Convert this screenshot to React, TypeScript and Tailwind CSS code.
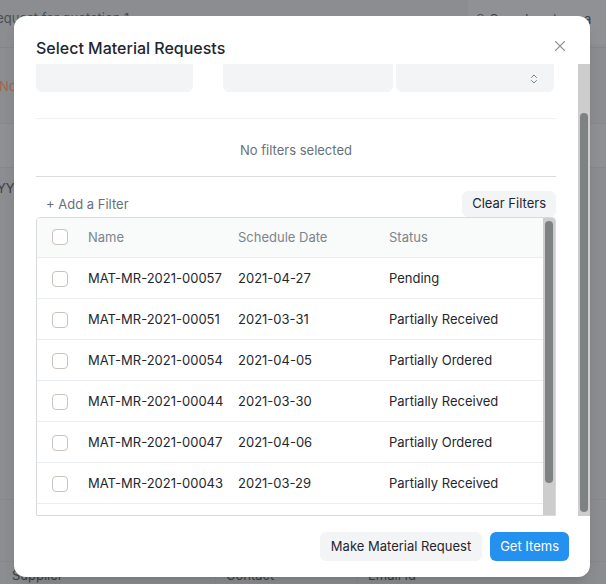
import { X, ChevronsUpDown, Search } from "lucide-react";

const rows = [
  { name: "MAT-MR-2021-00057", date: "2021-04-27", status: "Pending" },
  { name: "MAT-MR-2021-00051", date: "2021-03-31", status: "Partially Received" },
  { name: "MAT-MR-2021-00054", date: "2021-04-05", status: "Partially Ordered" },
  { name: "MAT-MR-2021-00044", date: "2021-03-30", status: "Partially Received" },
  { name: "MAT-MR-2021-00047", date: "2021-04-06", status: "Partially Ordered" },
  { name: "MAT-MR-2021-00043", date: "2021-03-29", status: "Partially Received" },
  { name: "", date: "", status: "" },
];

function Checkbox() {
  return <div className="w-4 h-4 rounded-[4px] border border-[#c9c4be] bg-white shrink-0" />;
}

function Background() {
  return (
    <div className="h-[584px] w-full bg-[#8b8d90] flex flex-col text-[13px] text-[#3d4145]">
      <div className="h-[48px] flex border-b border-[#84868a]">
        <div className="flex-1 pt-[9px] -ml-[12px] text-[#4a4e52]">Request for quotation 1</div>
        <div className="w-[138px] h-[44px] rounded-bl-lg bg-[#8f9195] flex items-start pt-[10px] pl-[8px] gap-1 text-[#3a3e42]">
          <Search size={14} className="mt-[1px]" />
          <span>Search or type a command</span>
        </div>
      </div>
      <div className="h-[76px] flex items-center border-b border-[#86888b]">
        <span className="text-[#a3654f] -ml-[1px] mt-[2px]">No</span>
      </div>
      <div className="h-[44px] bg-[#8e9093] border-b border-[#86888b]" />
      <div className="h-[30px] flex items-end text-[#3d4145]">
        <span className="-ml-[3px]">YYY</span>
      </div>
      <div className="flex-1 border-b border-[#86888b]" />
      <div className="h-[62px] border-b border-[#86888b]" />
      <div className="h-[22px] flex">
        <div className="w-[216px] border-r border-[#86888b] pl-[12px] pt-[4px]">Supplier</div>
        <div className="w-[142px] border-r border-[#86888b] pl-[10px] pt-[4px]">Contact</div>
        <div className="flex-1 pl-[10px] pt-[4px]">Email Id</div>
      </div>
    </div>
  );
}

export default function App() {
  return (
    <div className="relative w-[606px] h-[584px] overflow-hidden font-['Inter',sans-serif]">
      <Background />

      <div className="absolute left-[14px] top-[16px] w-[576px] h-[561px] bg-white rounded-xl shadow-lg flex flex-col overflow-hidden">
        <div className="h-[48px] shrink-0 flex items-start justify-between pl-[22px] pr-[22px]">
          <h2 className="pt-[20px] text-[16px] leading-6 font-medium text-[#1f272e]">Select Material Requests</h2>
          <X size={18} strokeWidth={1.5} className="mt-[21px] text-[#8d949a] -mr-[1px]" />
        </div>

        <div className="flex h-[452px] shrink-0">
          <div className="flex-1 pl-[22px] pr-[22px] overflow-hidden flex flex-col">
            <div className="flex h-[28px] shrink-0">
              <div className="w-[157px] bg-[#f3f4f6] rounded-b-md" />
              <div className="w-[170px] ml-[30px] bg-[#f3f4f6] rounded-b-md" />
              <div className="w-[158px] ml-[3px] bg-[#f3f4f6] rounded-b-md flex items-center justify-end pr-[14px] pt-[2px]">
                <ChevronsUpDown size={12} strokeWidth={1.5} className="text-[#525b63]" />
              </div>
            </div>

            <div className="mt-[26px] border-t border-[#eef0f2] h-[58px] flex items-center justify-center pt-[7px] text-[13px] text-[#687178]">
              No filters selected
            </div>
            <div className="border-t border-[#d8dcdf]" />

            <div className="mt-[14px] flex items-center justify-between h-[26px]">
              <span className="pl-[10px] pt-[2px] text-[13px] text-[#687178]">+ Add a Filter</span>
              <button className="h-[26px] px-[10px] rounded-md bg-[#f3f4f6] text-[13px] text-[#1f272e]">Clear Filters</button>
            </div>

            <div className="flex border border-[#d6dadd] rounded-t-[4px] h-[300px] overflow-hidden">
              <div className="flex-1 flex flex-col">
                <div className="h-[40px] shrink-0 bg-[#f9fafa] border-b border-[#ebeef0] flex items-center text-[13px] text-[#7c858d]">
                  <div className="w-[51px] pl-[15px]">
                    <Checkbox />
                  </div>
                  <div className="w-[150px]">Name</div>
                  <div className="w-[151px]">Schedule Date</div>
                  <div className="flex-1">Status</div>
                </div>
                {rows.map((r, i) => (
                  <div
                    key={i}
                    className="h-[41px] shrink-0 border-b border-[#ebeef0] flex items-center pt-[2px] text-[13px] text-[#1f272e]"
                  >
                    <div className="w-[51px] pl-[15px]">{r.name && <Checkbox />}</div>
                    <div className="w-[150px]">{r.name}</div>
                    <div className="w-[151px]">{r.date}</div>
                    <div className="flex-1">{r.status}</div>
                  </div>
                ))}
              </div>
              <div className="w-[12px] bg-[#cdcdcd] flex justify-center pt-[3px]">
                <div className="w-[8px] h-[262px] rounded-full bg-[#7e8282]" />
              </div>
            </div>
          </div>

          <div className="w-[12px] bg-[#cdcdcd] flex justify-center pt-[49px]">
            <div className="w-[8px] h-[399px] rounded-full bg-[#7e8282]" />
          </div>
        </div>

        <div className="flex-1 flex items-start justify-end gap-[8px] pr-[21px] pt-[16px]">
          <button className="h-[29px] px-[11px] rounded-md bg-[#f3f4f6] text-[13px] text-[#1f272e]">Make Material Request</button>
          <button className="h-[29px] px-[10px] rounded-md bg-[#2490ef] text-[13px] text-white">Get Items</button>
        </div>
      </div>
    </div>
  );
}
